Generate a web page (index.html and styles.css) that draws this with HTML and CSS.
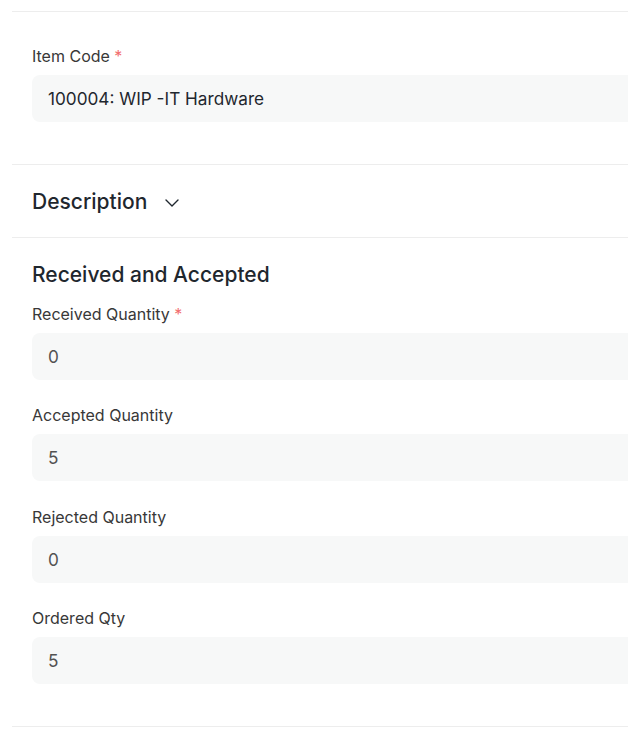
FILE: index.html
```html
<!DOCTYPE html>
<html lang="en">
<head>
  <meta charset="UTF-8">
  <title>Purchase Receipt Item</title>
  <link rel="stylesheet" href="styles.css">
</head>
<body>
  <div class="form">
    <div class="section">
      <div class="field">
        <label class="field-label">Item Code <span class="reqd">*</span></label>
        <div class="field-input">100004: WIP -IT Hardware</div>
      </div>
    </div>

    <div class="section section-collapsed">
      <div class="section-head">
        Description
        <svg class="chevron" width="14" height="8" viewBox="0 0 14 8" fill="none">
          <path d="M1 1l6 6 6-6" stroke="#1f272e" stroke-width="1.4" stroke-linecap="round" stroke-linejoin="round"/>
        </svg>
      </div>
    </div>

    <div class="section section-qty">
      <div class="section-head section-title">Received and Accepted</div>
      <div class="field">
        <label class="field-label">Received Quantity <span class="reqd">*</span></label>
        <div class="field-input muted">0</div>
      </div>
      <div class="field">
        <label class="field-label">Accepted Quantity</label>
        <div class="field-input muted">5</div>
      </div>
      <div class="field">
        <label class="field-label">Rejected Quantity</label>
        <div class="field-input muted">0</div>
      </div>
      <div class="field">
        <label class="field-label">Ordered Qty</label>
        <div class="field-input muted">5</div>
      </div>
    </div>
    <div class="section"></div>
  </div>
</body>
</html>
```

FILE: styles.css
```css
body {
  margin: 0;
  font-family: Inter, "Noto Sans", sans-serif;
  color: #1f272e;
  background: #fff;
  overflow: hidden;
}
.form {
  width: 720px;
  margin-left: 12px;
  padding-top: 11px;
}
.section {
  border-top: 1px solid #ededed;
  padding: 34px 0 42px 20px;
}
.section-collapsed {
  padding: 25px 0 23px 20px;
}
.section-qty {
  padding-bottom: 42px;
}
.section-head {
  display: flex;
  align-items: center;
  font-size: 21px;
  line-height: 24px;
  font-weight: 500;
}
.section-title {
  margin-top: -9px;
  margin-bottom: 17px;
}
.chevron {
  margin-left: 18px;
  margin-top: 2px;
}
.field {
  margin-bottom: 25.33px;
}
.field:last-child {
  margin-bottom: 0;
}
.field-label {
  display: block;
  font-size: 16px;
  line-height: 20px;
  color: #383838;
  margin-bottom: 9px;
}
.reqd {
  color: #f26d6d;
}
.field-input {
  height: 47px;
  box-sizing: border-box;
  background: #f7f8f8;
  border-radius: 8px;
  padding: 0 16px;
  display: flex;
  align-items: center;
  font-size: 17.2px;
  color: #1f272e;
}
.muted {
  color: #525252;
}
```
